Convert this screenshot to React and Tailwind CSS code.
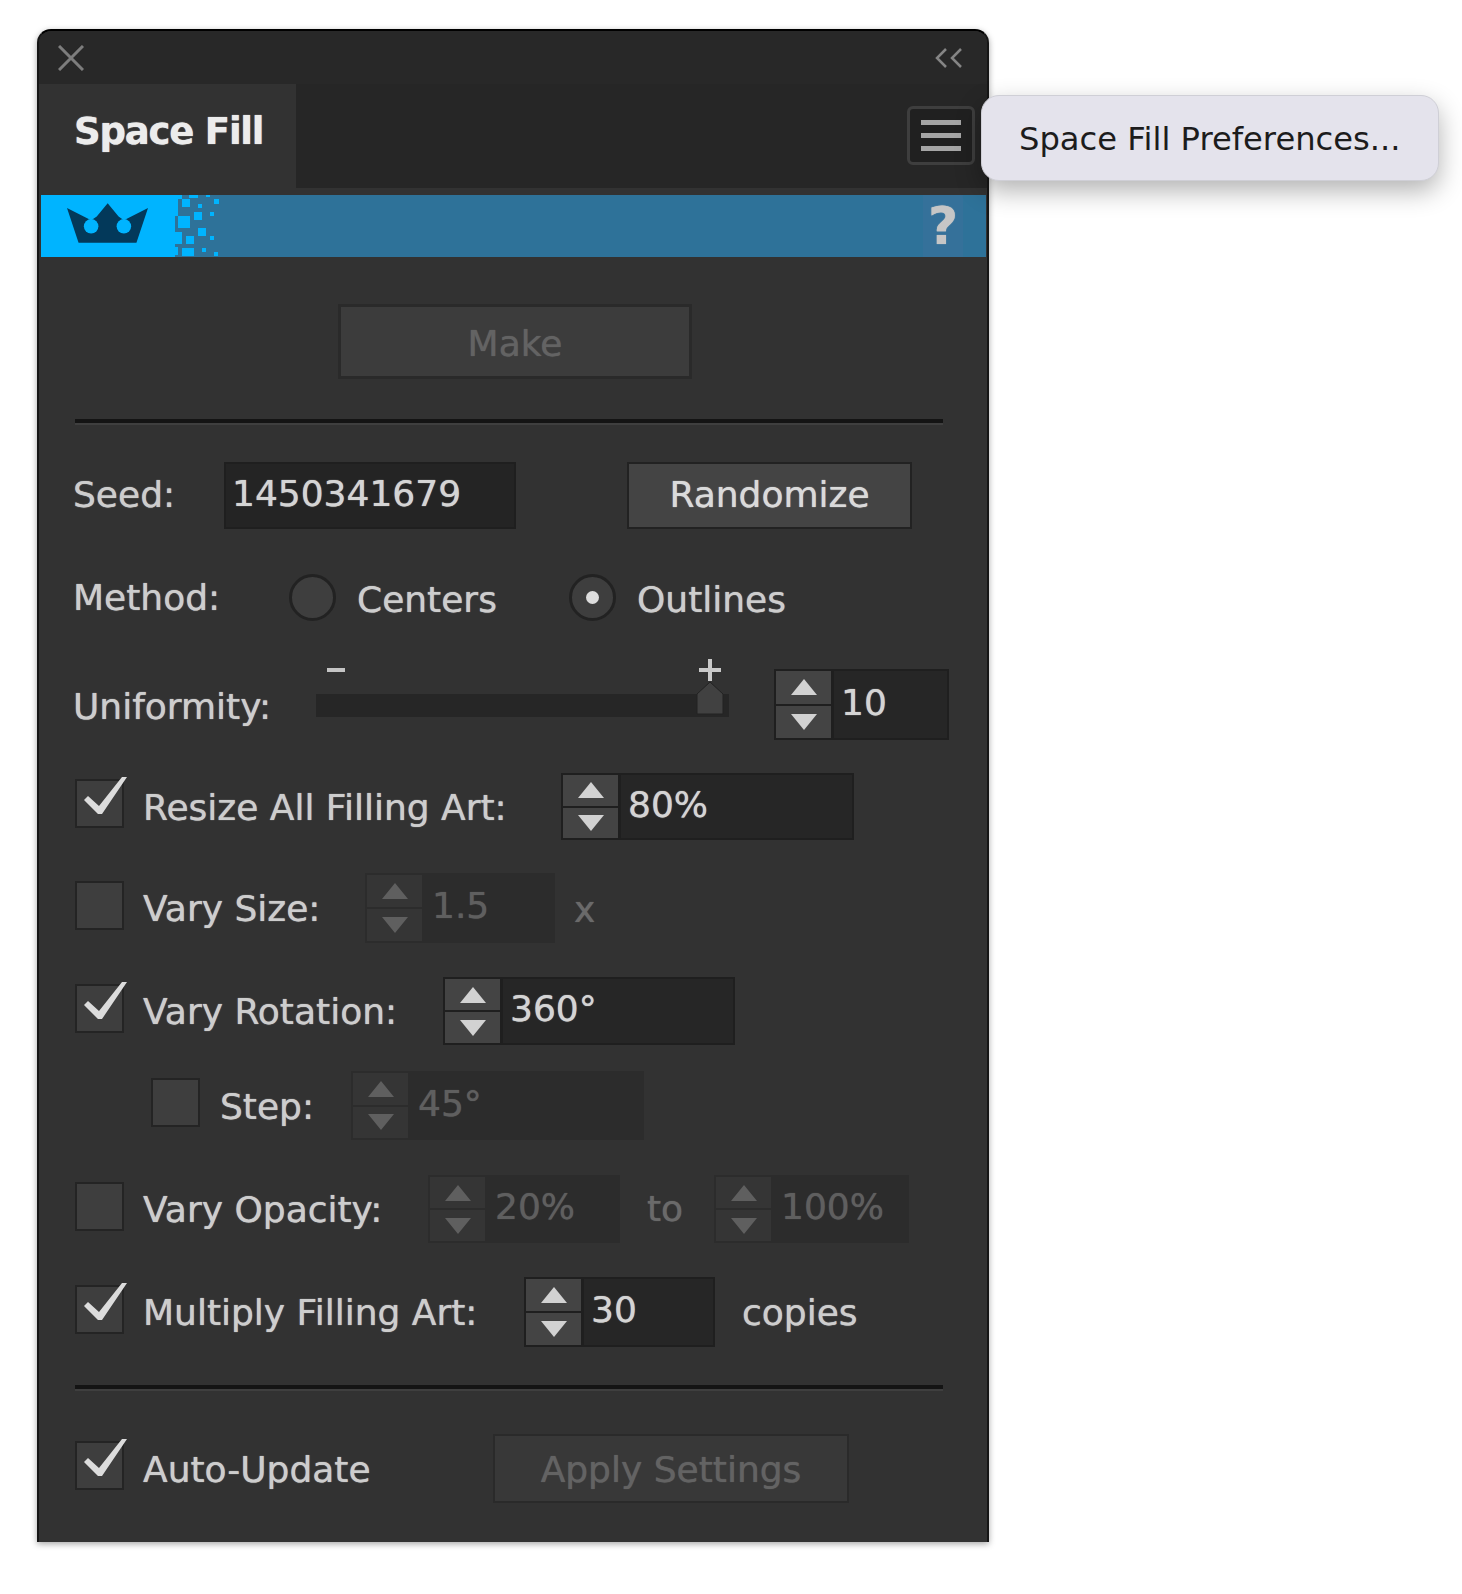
import React from "react";

const FONT = "font-['DejaVu_Sans',sans-serif]";

// Pixels of the dissolve between the bright and dark part of the banner
const pixels = [
  [0, 3, 8, 21], [0, 24, 4, 16], [12, 7, 8, 8], [6, 3, 6, 4], [19, 3, 9, 3], [36, 3, 4, 2],
  [28, 12, 4, 4], [44, 7, 5, 5], [24, 20, 8, 8], [40, 20, 4, 4], [8, 24, 12, 12],
  [28, 36, 8, 8], [0, 40, 12, 12], [16, 44, 8, 8], [40, 44, 4, 4], [0, 55, 8, 8],
  [12, 56, 12, 8], [32, 56, 4, 4], [44, 60, 4, 4],
];

const Crown = () => (
  <svg width="81" height="40" viewBox="0 0 245 120" className="block">
    <path d="M0 15 L58 44 L73 52 L90 40 L123 0 L156 40 L172 52 L187 44 L245 15 L210 120 L35 120 Z" fill="#03395a" />
    <circle cx="73" cy="70" r="22" fill="#00b4ff" />
    <circle cx="172" cy="70" r="22" fill="#00b4ff" />
  </svg>
);

const Arrow = ({ up, dim }) => (
  <svg width="28" height="20" viewBox="0 0 28 20" className="block">
    <path d={up ? "M14 2 L27 18 L1 18 Z" : "M1 2 L27 2 L14 18 Z"} fill={dim ? "#5f5f5f" : "#d2d2d2"} />
  </svg>
);

const Stepper = ({ value, className, dim }) => (
  <div className={`flex border-2 ${dim ? "border-[#2c2c2c]" : "border-[#1f1f1f]"} ${className}`}>
    <div className={`flex w-[55px] shrink-0 flex-col gap-[2px] ${dim ? "bg-[#2c2c2c]" : "bg-[#1f1f1f]"}`}>
      <div className={`flex flex-1 items-center justify-center ${dim ? "bg-[#353535]" : "bg-[#444444]"}`}>
        <Arrow up dim={dim} />
      </div>
      <div className={`flex flex-1 items-center justify-center ${dim ? "bg-[#353535]" : "bg-[#444444]"}`}>
        <Arrow dim={dim} />
      </div>
    </div>
    <div className={`flex flex-1 items-center border-l-[3px] pb-[4px] pl-[7px] text-[36px] ${dim ? "border-[#2c2c2c] bg-[#2c2c2c] text-[#5f5f5f]" : "border-[#1f1f1f] bg-[#262626] text-[#d4d4d4]"}`}>
      {value}
    </div>
  </div>
);

const Checkbox = ({ checked, className = "" }) => (
  <div className={`relative mb-[6px] h-[49px] w-[49px] shrink-0 border-2 border-[#242424] bg-[#3e3e3e] ${className}`}>
    {checked && (
      <svg width="56" height="44" viewBox="0 -4 56 44" className="absolute left-[-2px] top-[-6px]">
        <path d="M9 21 L13 17 L24 27 L47 -2 L52 -2 L27 35 L23 35 Z" fill="#dcdcdc" />
      </svg>
    )}
  </div>
);

const Radio = ({ on }) => (
  <div className="flex h-[47px] w-[47px] shrink-0 items-center justify-center rounded-full border-[3px] border-[#222222] bg-[#3e3e3e]">
    {on && <div className="h-[13px] w-[13px] rounded-full bg-[#dddddd]" />}
  </div>
);

const Label = ({ children, className = "" }) => (
  <span className={`shrink-0 whitespace-nowrap pt-[2px] text-[36px] text-[#cdcdcd] ${className}`}>{children}</span>
);

const Divider = ({ className }) => (
  <div className={`ml-[36px] h-[6px] w-[868px] border-b-2 border-[#3f3f3f] bg-[#141414] ${className}`} />
);

export default function App() {
  return (
    <div className={`relative h-[1594px] w-[1462px] overflow-hidden bg-white ${FONT}`}>
      <div className="relative ml-[37px] mt-[29px] w-[952px] rounded-t-[14px] border-x-2 border-t-2 border-[#161616] border-t-black bg-[#323232] shadow-[0_2px_6px_rgba(0,0,0,0.35)] [text-shadow:0_0_1px_currentColor]">
        {/* title bar */}
        <div className="flex h-[53px] items-center justify-between rounded-t-[12px] bg-[#282828] pl-[19px] pr-[24px]">
          <svg width="26" height="26" viewBox="0 0 26 26">
            <path d="M1 1 L25 25 M25 1 L1 25" stroke="#7d7d7d" strokeWidth="3" />
          </svg>
          <svg width="28" height="20" viewBox="0 0 28 20">
            <path d="M11 1 L2 10 L11 19 M26 1 L17 10 L26 19" stroke="#858585" strokeWidth="2.5" fill="none" />
          </svg>
        </div>

        {/* tab strip */}
        <div className="flex h-[111px] items-start bg-[#323232]">
          <div className="flex h-[104px] w-[257px] items-center bg-[#323232] pb-[8px] pl-[35px] text-[37px] font-bold tracking-[-1.2px] text-[#ececec]">
            Space Fill
          </div>
          <div className="flex h-[104px] flex-1 items-start justify-end bg-[#262626] pr-[12px] pt-[22px]">
            <div className="flex h-[59px] w-[68px] flex-col items-center justify-center gap-[8px] rounded-[6px] border-[3px] border-[#3e3e3e] bg-[#202020]">
              <div className="h-[5px] w-[40px] bg-[#a5a5a5]" />
              <div className="h-[5px] w-[40px] bg-[#a5a5a5]" />
              <div className="h-[5px] w-[40px] bg-[#a5a5a5]" />
            </div>
          </div>
        </div>

        {/* banner */}
        <div className="relative ml-[2px] flex h-[62px] w-[945px] items-stretch bg-[#2e7299]">
          <div className="flex w-[134px] items-center bg-[#00b4ff] pb-[6px] pl-[26px]">
            <Crown />
          </div>
          <svg width="60" height="62" viewBox="0 3 60 62" className="absolute left-[129px] top-0">
            {pixels.map(([x, y, w, h], i) => (
              <rect key={i} x={x} y={y} width={w} height={h} fill="#00b4ff" />
            ))}
          </svg>
          <div className="absolute right-[23px] top-0 flex h-full w-[40px] items-center justify-center bg-[#35719a] text-[52px] font-bold text-[#c6c6c6]">
            ?
          </div>
        </div>

        {/* settings */}
        <div className="flex flex-col pb-[39px] pt-[47px]">
          <div className="flex h-[75px] justify-start">
            <div className="ml-[299px] flex h-full w-[354px] items-center justify-center border-[3px] border-[#2a2a2a] bg-[#3c3c3c] pt-[4px] text-[36px] text-[#636363]">
              Make
            </div>
          </div>

          <Divider className="mt-[40px]" />

          <div className="mt-[37px] flex h-[67px] items-center pl-[34px]">
            <Label className="mb-[4px] w-[151px]">Seed:</Label>
            <div className="flex h-full w-[292px] items-center border-2 border-[#1f1f1f] bg-[#242424] pb-[3px] pl-[6px] text-[36px] text-[#d4d4d4]">
              1450341679
            </div>
            <div className="ml-[111px] flex h-full w-[285px] items-center justify-center border-2 border-[#222222] bg-[#444444] pb-[2px] text-[36px] text-[#dadada]">
              Randomize
            </div>
          </div>

          <div className="mt-[34px] flex h-[68px] items-center pl-[34px]">
            <Label className="w-[216px]">Method:</Label>
            <Radio />
            <Label className="ml-[21px] mt-[3px] w-[212px]">Centers</Label>
            <Radio on />
            <Label className="ml-[21px] mt-[3px]">Outlines</Label>
          </div>

          <div className="mt-[30px] flex h-[79px] pl-[34px]">
            <Label className="mt-[17px] w-[243px]">Uniformity:</Label>
            <div className="relative flex h-[56px] w-[413px] flex-col justify-between">
              <div className="-mt-[2px] flex items-center justify-between pl-[11px] pr-[8px]">
                <div className="h-[4px] w-[18px] bg-[#c4c4c4]" />
                <svg width="22" height="22" viewBox="0 0 22 22">
                  <path d="M0 11 H22 M11 0 V22" stroke="#c9c9c9" strokeWidth="4" />
                </svg>
              </div>
              <div className="h-[23px] w-full border border-[#262626] bg-[#262626]" />
              <svg width="28" height="34" viewBox="0 0 28 34" className="absolute bottom-[2px] right-[5px]">
                <path d="M14 1 L27 13 V33 H1 V13 Z" fill="#414141" stroke="#222222" strokeWidth="1" />
              </svg>
            </div>
            <Stepper value="10" className="ml-[45px] mt-[8px] h-[71px] w-[175px]" />
          </div>

          <div className="mt-[33px] flex h-[67px] items-center pl-[36px]">
            <Checkbox checked />
            <Label className="ml-[19px] w-[418px]">Resize All Filling Art:</Label>
            <Stepper value="80%" className="h-full w-[293px]" />
          </div>

          <div className="mt-[33px] flex h-[70px] items-center pl-[36px]">
            <Checkbox />
            <Label className="ml-[19px] w-[222px]">Vary Size:</Label>
            <Stepper value="1.5" dim className="h-full w-[190px]" />
            <span className="ml-[19px] mt-[4px] text-[36px] text-[#6a6a6a]">x</span>
          </div>

          <div className="mt-[34px] flex h-[68px] items-center pl-[36px]">
            <Checkbox checked />
            <Label className="ml-[19px] w-[300px]">Vary Rotation:</Label>
            <Stepper value="360°" className="h-full w-[292px]" />
          </div>

          <div className="mt-[26px] flex h-[69px] items-center pl-[112px]">
            <Checkbox />
            <Label className="ml-[20px] w-[131px]">Step:</Label>
            <Stepper value="45°" dim className="h-full w-[293px]" />
          </div>

          <div className="mt-[35px] flex h-[68px] items-center pl-[36px]">
            <Checkbox />
            <Label className="ml-[19px] w-[285px]">Vary Opacity:</Label>
            <Stepper value="20%" dim className="h-full w-[192px]" />
            <span className="ml-[27px] w-[67px] text-[36px] text-[#6a6a6a]">to</span>
            <Stepper value="100%" dim className="h-full w-[195px]" />
          </div>

          <div className="mt-[34px] flex h-[70px] items-center pl-[36px]">
            <Checkbox checked />
            <Label className="ml-[19px] w-[381px]">Multiply Filling Art:</Label>
            <Stepper value="30" className="h-full w-[191px]" />
            <Label className="ml-[27px]">copies</Label>
          </div>

          <Divider className="mt-[38px]" />

          <div className="mt-[43px] flex h-[69px] items-center pl-[36px]">
            <Checkbox checked />
            <Label className="ml-[19px] w-[350px]">Auto-Update</Label>
            <div className="flex h-full w-[356px] items-center justify-center border-2 border-[#2a2a2a] bg-[#383838] pt-[3px] text-[36px] text-[#636363]">
              Apply Settings
            </div>
          </div>
        </div>

        {/* flyout menu */}
        <div className="absolute left-[942px] top-[64px] flex h-[86px] w-[458px] items-center rounded-[18px] border border-[#cfcfd6] bg-[#e4e3ec] pl-[37px] pt-[2px] text-[32.2px] text-[#1c1c1c] shadow-[0_10px_26px_rgba(0,0,0,0.3)] [text-shadow:none]">
          Space Fill Preferences...
        </div>
      </div>
    </div>
  );
}
